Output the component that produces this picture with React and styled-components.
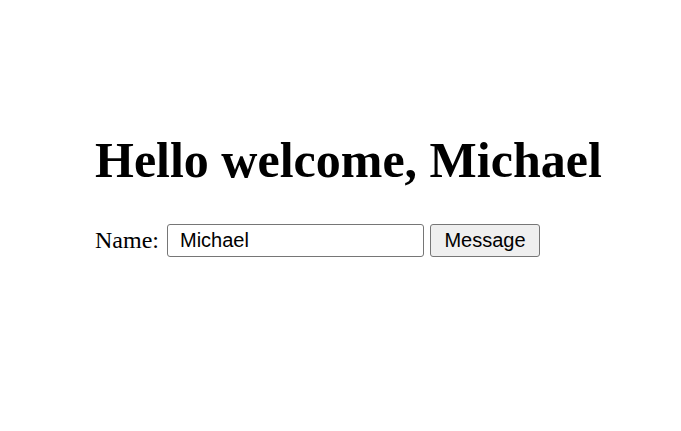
import React, { useState } from 'react'
import styled, { createGlobalStyle } from 'styled-components';

const GlobalStyle = createGlobalStyle`
  html, body {
    margin: 0;
    padding: 0;
    background: #ffffff;
  }
  body {
    font-family: "Liberation Serif", "Times New Roman", serif;
    color: #000000;
  }
`

const Page = styled.main`
  width: 681px;
  height: 431px;
  box-sizing: border-box;
  padding: 131px 0 0 95px;
  display: flex;
  flex-direction: column;
  gap: 35px;
`

const Title = styled.h1`
  margin: 0;
  font-family: "Liberation Serif", "Times New Roman", serif;
  font-size: 50px;
  font-weight: 700;
  line-height: 58px;
  white-space: nowrap;
`

const Row = styled.form`
  display: flex;
  align-items: center;
  gap: 6px;
`

const Label = styled.label`
  margin-right: 2px;
  font-family: "Liberation Serif", "Times New Roman", serif;
  font-size: 24px;
  line-height: 33px;
`

const Input = styled.input`
  box-sizing: border-box;
  width: 257px;
  height: 33px;
  margin: 0;
  padding: 2px 12px;
  border: 1.5px solid #767676;
  border-radius: 3px;
  background: #ffffff;
  font-family: "Liberation Sans", Arial, sans-serif;
  font-size: 20px;
  color: #000000;
  outline: none;
`

const Button = styled.button`
  box-sizing: border-box;
  width: 110px;
  height: 33px;
  margin: 0;
  padding: 0 9px;
  border: 1.5px solid #767676;
  border-radius: 3px;
  background: #efefef;
  font-family: "Liberation Sans", Arial, sans-serif;
  font-size: 20px;
  color: #000000;
  cursor: pointer;
`

const App = () => {
  const [name, setName] = useState('Michael')

  return (
    <>
      <GlobalStyle />
      <Page>
        <Title>Hello welcome, {name}</Title>
        <Row onSubmit={e => e.preventDefault()}>
          <Label htmlFor="name">Name:</Label>
          <Input id="name" value={name} onChange={e => setName(e.target.value)} />
          <Button type="button">Message</Button>
        </Row>
      </Page>
    </>
  )
}

export default App
